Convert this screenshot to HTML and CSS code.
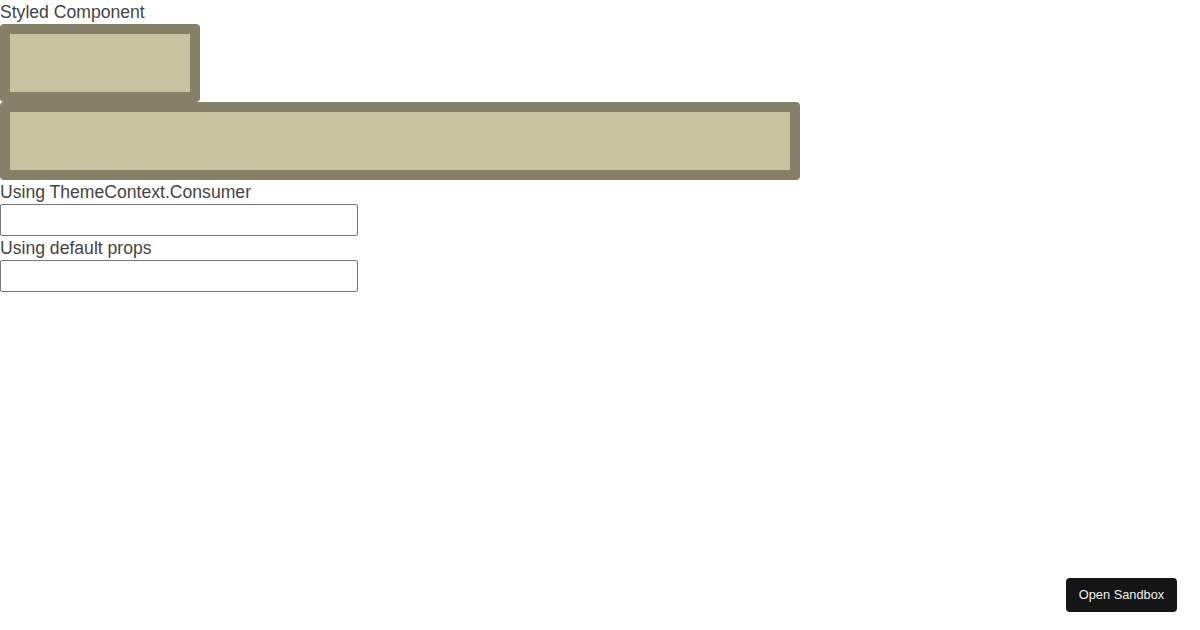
FILE: index.html
```html
<!DOCTYPE html>
<html>
<head>
<meta charset="utf-8">
<link rel="stylesheet" href="styles.css">
</head>
<body>
<div class="app">
  <div class="label">Styled Component</div>
  <div class="box small"></div>
  <div class="box wide"></div>
  <div class="label">Using ThemeContext.Consumer</div>
  <input class="field" type="text">
  <div class="label">Using default props</div>
  <input class="field" type="text">
</div>
<button class="sandbox">Open Sandbox</button>
</body>
</html>
```
FILE: styles.css
```css
html, body {
  margin: 0;
  padding: 0;
  background: #fff;
}
body {
  font-family: "Liberation Sans", Arial, sans-serif;
  color: #444;
}
.app {
  display: flex;
  flex-direction: column;
  align-items: flex-start;
}
.label {
  font-size: 17.6px;
  line-height: 24px;
  height: 24px;
}
.box {
  box-sizing: border-box;
  height: 78px;
  border: 10px solid #878069;
  background: #c9c2a0;
  border-radius: 4px;
}
.small { width: 200px; }
.wide { width: 800px; }
.field {
  box-sizing: border-box;
  width: 358px;
  height: 32px;
  margin: 0;
  padding: 0 4px;
  border: 1px solid #767676;
  border-radius: 2px;
  background: #fff;
  font-family: inherit;
}
.sandbox {
  position: fixed;
  right: 23px;
  bottom: 18px;
  width: 111px;
  height: 34px;
  padding: 0 0 2px;
  border: none;
  border-radius: 4px;
  background: #151515;
  color: #f2f2f2;
  font-family: "Liberation Sans", Arial, sans-serif;
  font-size: 12.8px;
}
```
